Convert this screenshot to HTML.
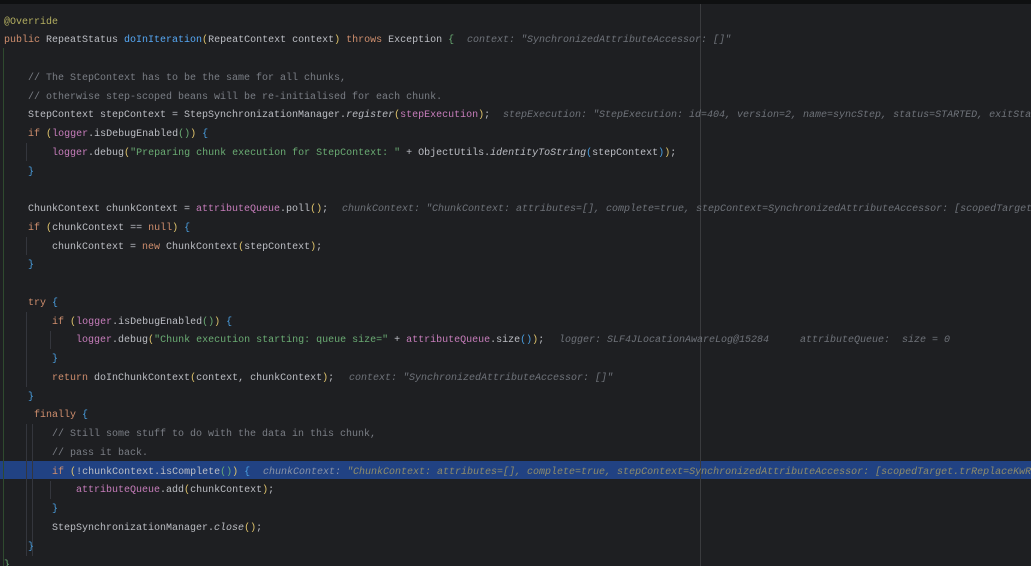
<!DOCTYPE html>
<html><head><meta charset="utf-8"><style>
html,body{margin:0;padding:0;width:1031px;height:566px;overflow:hidden}
body{background:#1e1f22;position:relative;font-family:"Liberation Mono",monospace;font-size:10px;color:#bcbec4}
.top{position:absolute;left:0;top:0;width:1031px;height:4px;background:#0f1011}
.w{position:absolute;left:0;top:2px;width:1031px;height:564px;overflow:hidden}
.l{position:absolute;left:4px;height:18.75px;line-height:18.75px;white-space:pre}
.k{color:#cf8e6d}.c{color:#7a7e85}.s{color:#6aab73}.m{color:#56a8f5}.f{color:#c77dbb}.a{color:#b3ae60}
.h{color:#6f737a;font-style:italic}.hs{color:#8f8c6a;font-style:italic}
.i{font-style:italic}
.y{color:#e0c46c}.g{color:#6aab73}.b{color:#4a9fe0}
.vl{position:absolute;width:1px}
.hl{position:absolute;left:0;top:461px;width:1031px;height:18px;background:#214283}
</style></head><body>
<div class="top"></div>
<div class="hl"></div>
<div class="vl" style="left:700px;top:4px;height:562px;background:#3a3b3e"></div>
<div class="vl" style="left:3px;top:48px;height:518px;background:#2f4a2f"></div>
<div class="vl" style="left:26px;top:143px;height:18px;background:#34363d"></div>
<div class="vl" style="left:26px;top:237px;height:18px;background:#34363d"></div>
<div class="vl" style="left:26px;top:312px;height:75px;background:#34363d"></div>
<div class="vl" style="left:50px;top:331px;height:18px;background:#34363d"></div>
<div class="vl" style="left:26px;top:424px;height:132px;background:#34363d"></div>
<div class="vl" style="left:32px;top:424px;height:132px;background:#34363d"></div>
<div class="vl" style="left:50px;top:481px;height:18px;background:#34363d"></div>
<div class="w">
<div class="l" style="top:11.5px"><span class="a">@Override</span></div>
<div class="l" style="top:30.25px"><span class="k">public</span> RepeatStatus <span class="m">doInIteration</span><span class="y">(</span>RepeatContext context<span class="y">)</span> <span class="k">throws</span> Exception <span class="g">{</span></div>
<div class="l h" style="left:467px;top:30.25px">context: "SynchronizedAttributeAccessor: []"</div>
<div class="l c" style="top:67.75px">    // The StepContext has to be the same for all chunks,</div>
<div class="l c" style="top:86.5px">    // otherwise step-scoped beans will be re-initialised for each chunk.</div>
<div class="l" style="top:105.25px">    StepContext stepContext = StepSynchronizationManager.<span class="i">register</span><span class="y">(</span><span class="f">stepExecution</span><span class="y">)</span>;</div>
<div class="l h" style="left:503px;top:105.25px">stepExecution: "StepExecution: id=404, version=2, name=syncStep, status=STARTED, exitSta</div>
<div class="l" style="top:124px">    <span class="k">if</span> <span class="y">(</span><span class="f">logger</span>.isDebugEnabled<span class="g">()</span><span class="y">)</span> <span class="b">{</span></div>
<div class="l" style="top:142.75px">        <span class="f">logger</span>.debug<span class="y">(</span><span class="s">"Preparing chunk execution for StepContext: "</span> + ObjectUtils.<span class="i">identityToString</span><span class="b">(</span>stepContext<span class="b">)</span><span class="y">)</span>;</div>
<div class="l" style="top:161.5px">    <span class="b">}</span></div>
<div class="l" style="top:199px">    ChunkContext chunkContext = <span class="f">attributeQueue</span>.poll<span class="y">()</span>;</div>
<div class="l h" style="left:342px;top:199px">chunkContext: "ChunkContext: attributes=[], complete=true, stepContext=SynchronizedAttributeAccessor: [scopedTarget</div>
<div class="l" style="top:217.75px">    <span class="k">if</span> <span class="y">(</span>chunkContext == <span class="k">null</span><span class="y">)</span> <span class="b">{</span></div>
<div class="l" style="top:236.5px">        chunkContext = <span class="k">new</span> ChunkContext<span class="y">(</span>stepContext<span class="y">)</span>;</div>
<div class="l" style="top:255.25px">    <span class="b">}</span></div>
<div class="l" style="top:292.75px">    <span class="k">try</span> <span class="b">{</span></div>
<div class="l" style="top:311.5px">        <span class="k">if</span> <span class="y">(</span><span class="f">logger</span>.isDebugEnabled<span class="g">()</span><span class="y">)</span> <span class="b">{</span></div>
<div class="l" style="top:330.25px">            <span class="f">logger</span>.debug<span class="y">(</span><span class="s">"Chunk execution starting: queue size="</span> + <span class="f">attributeQueue</span>.size<span class="b">()</span><span class="y">)</span>;</div>
<div class="l h" style="left:559px;top:330.25px">logger: SLF4JLocationAwareLog@15284</div>
<div class="l h" style="left:800px;top:330.25px">attributeQueue:  size = 0</div>
<div class="l" style="top:349px">        <span class="b">}</span></div>
<div class="l" style="top:367.75px">        <span class="k">return</span> doInChunkContext<span class="y">(</span>context, chunkContext<span class="y">)</span>;</div>
<div class="l h" style="left:349px;top:367.75px">context: "SynchronizedAttributeAccessor: []"</div>
<div class="l" style="top:386.5px">    <span class="b">}</span></div>
<div class="l" style="top:405.25px">     <span class="k">finally</span> <span class="b">{</span></div>
<div class="l c" style="top:424px">        // Still some stuff to do with the data in this chunk,</div>
<div class="l c" style="top:442.75px">        // pass it back.</div>
<div class="l" style="top:461.5px">        <span class="k">if</span> <span class="y">(</span>!chunkContext.isComplete<span class="g">()</span><span class="y">)</span> <span class="b">{</span></div>
<div class="l hs" style="left:263px;top:461.5px"><span style="color:#8a93a6">chunkContext:</span> "ChunkContext: attributes=[], complete=true, stepContext=SynchronizedAttributeAccessor: [scopedTarget.trReplaceKwR</div>
<div class="l" style="top:480.25px">            <span class="f">attributeQueue</span>.add<span class="y">(</span>chunkContext<span class="y">)</span>;</div>
<div class="l" style="top:499px">        <span class="b">}</span></div>
<div class="l" style="top:517.75px">        StepSynchronizationManager.<span class="i">close</span><span class="y">()</span>;</div>
<div class="l" style="top:536.5px">    <span class="b">}</span></div>
<div class="l" style="top:555.25px"><span class="g">}</span></div>
</div>
</body></html>
